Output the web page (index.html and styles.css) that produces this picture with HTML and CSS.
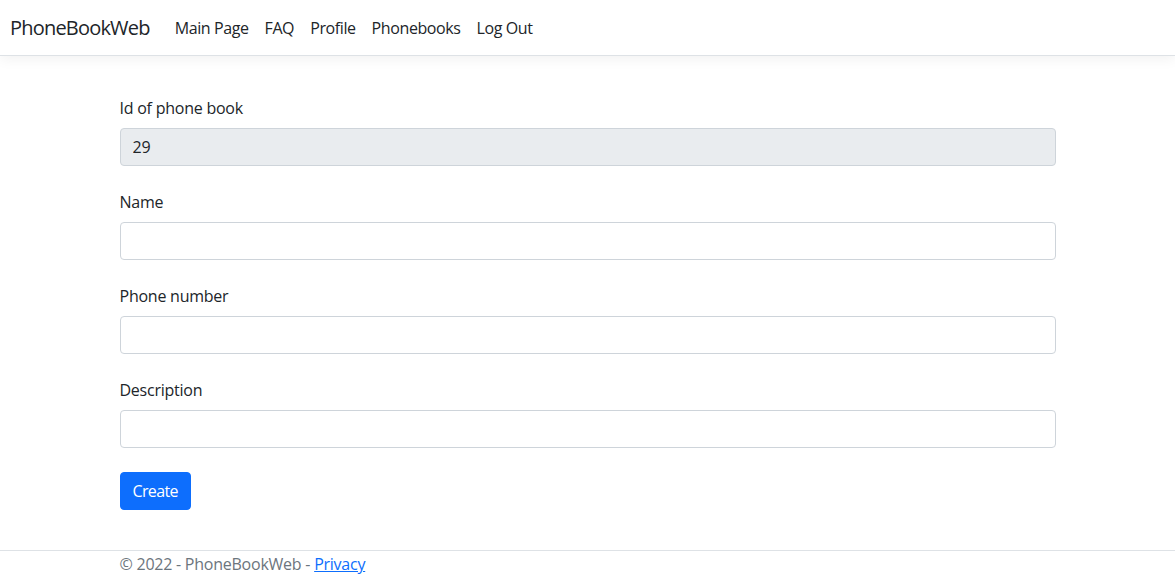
FILE: index.html
```html
<!DOCTYPE html>
<html lang="en">
  <head>
    <meta charset="UTF-8" />
    <meta name="viewport" content="width=device-width, initial-scale=1.0" />
    <title>Create - PhoneBookWeb</title>
    <link rel="stylesheet" href="styles.css">
  </head>
  <body>
    <header>
      <nav class="navbar">
        <a class="navbar-brand" href="#">PhoneBookWeb</a>
        <ul class="navbar-nav">
          <li><a class="nav-link" href="#">Main Page</a></li>
          <li><a class="nav-link" href="#">FAQ</a></li>
          <li><a class="nav-link" href="#">Profile</a></li>
          <li><a class="nav-link" href="#">Phonebooks</a></li>
          <li><a class="nav-link" href="#">Log Out</a></li>
        </ul>
      </nav>
    </header>
    <main class="container">
      <form class="create-form">
        <div class="form-group">
          <label class="form-label" for="bookId">Id of phone book</label>
          <input class="form-control" id="bookId" type="text" value="29" disabled>
        </div>
        <div class="form-group">
          <label class="form-label" for="name">Name</label>
          <input class="form-control" id="name" type="text">
        </div>
        <div class="form-group">
          <label class="form-label" for="phone">Phone number</label>
          <input class="form-control" id="phone" type="text">
        </div>
        <div class="form-group">
          <label class="form-label" for="description">Description</label>
          <input class="form-control" id="description" type="text">
        </div>
        <button class="btn btn-primary" type="submit">Create</button>
      </form>
    </main>
    <footer class="footer">
      <div class="container">
        &copy; 2022 - PhoneBookWeb - <a href="#">Privacy</a>
      </div>
    </footer>
  </body>
</html>
```

FILE: styles.css
```css
* {
  box-sizing: border-box;
}

html,
body {
  height: 100%;
}

body {
  margin: 0;
  display: flex;
  flex-direction: column;
  font-family: "Open Sans", "Noto Sans", sans-serif;
  font-size: 16px;
  line-height: 1.5;
  letter-spacing: -0.015em;
  color: #212529;
  background-color: #fff;
}

a {
  color: #0d6efd;
}

.navbar {
  display: flex;
  align-items: center;
  height: 56px;
  padding: 0 12px 0 10px;
  border-bottom: 1px solid #dee2e6;
  box-shadow: 0 4px 12px rgba(0, 0, 0, 0.05);
}

.navbar-brand {
  margin-right: 17px;
  font-size: 20px;
  line-height: 30px;
  letter-spacing: -0.04em;
  color: #212529;
  text-decoration: none;
}

.navbar-nav {
  display: flex;
  margin: 0;
  padding: 0;
  list-style: none;
}

.nav-link {
  display: block;
  padding: 8px;
  letter-spacing: -0.025em;
  color: #212529;
  text-decoration: none;
}

.container {
  width: 960px;
  margin: 0 auto;
  padding: 0 12px;
}

main.container {
  flex: 1;
  padding-top: 40px;
}

.form-group {
  margin-bottom: 24px;
}

.form-label {
  display: block;
  margin-bottom: 8px;
}

.form-control {
  display: block;
  width: 100%;
  height: 38px;
  padding: 6px 12px;
  font: inherit;
  letter-spacing: inherit;
  color: #212529;
  background-color: #fff;
  border: 1px solid #ced4da;
  border-radius: 4px;
}

.form-control:disabled {
  background-color: #e9ecef;
  opacity: 1;
}

.btn {
  display: inline-block;
  height: 38px;
  padding: 6px 12px;
  font: inherit;
  letter-spacing: -0.04em;
  border: 1px solid transparent;
  border-radius: 4px;
}

.btn-primary {
  color: #fff;
  background-color: #0d6efd;
  border-color: #0d6efd;
}

.footer {
  height: 29px;
  line-height: 26px;
  border-top: 1px solid #dee2e6;
  color: #6c757d;
  white-space: nowrap;
}
```
